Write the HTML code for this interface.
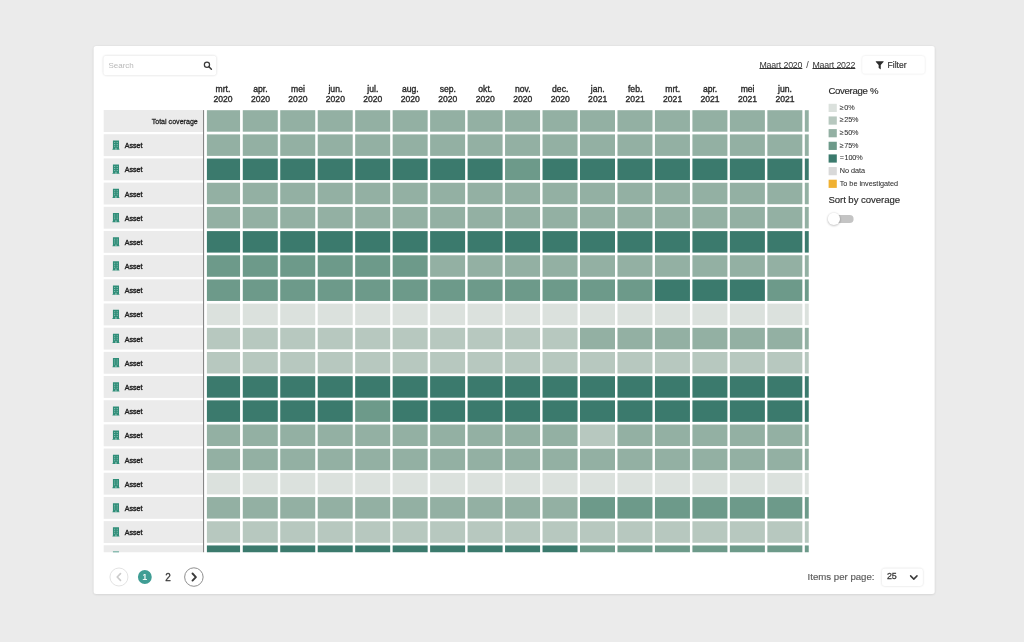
<!DOCTYPE html>
<html lang="nl"><head><meta charset="utf-8"><title>Coverage</title>
<style>
*{box-sizing:border-box;margin:0;padding:0}
html,body{width:1024px;height:642px;overflow:hidden}
body{background:#ebebeb;font-family:"Liberation Sans",sans-serif;color:#2b2b2b;position:relative}
.gfx{position:absolute;left:0;top:0;display:block}
.txt{position:absolute;left:0;top:0;width:1024px;height:642px;will-change:transform}
.txt>*{position:absolute;white-space:nowrap}
.ph{left:108.4px;top:60.8px;font-size:8px;color:#b9b9b9;line-height:10px}
.range{right:168.7px;top:59.9px;font-size:8.8px;letter-spacing:-0.16px;word-spacing:1.6px;line-height:11px;color:#333}
.range .u{text-decoration:underline;text-underline-offset:0.4px;text-decoration-thickness:0.9px;word-spacing:0}
.ftxt{left:887.6px;top:55.9px;font-size:8.5px;line-height:18.2px;color:#333;-webkit-text-stroke:0.2px #333}
.grid{left:103.4px;top:80px;width:705.35px;height:472.3px;overflow:hidden}
.grid>*{position:absolute;white-space:nowrap}
.mh{top:3.9px;width:35.4px;text-align:center;font-size:8.6px;line-height:10px;color:#2b2b2b;-webkit-text-stroke:0.35px #2b2b2b}
.lab{left:21.4px;height:21.9px;font-size:7.1px;color:#2b2b2b;-webkit-text-stroke:0.4px #222;line-height:24px}
.lab.tot{left:0;width:99.6px;text-align:right;padding-right:5.2px;-webkit-text-stroke:0.28px #222}
.lt{left:828.4px;font-size:9.6px;letter-spacing:-0.3px;line-height:14px;color:#2b2b2b;-webkit-text-stroke:0.15px #2b2b2b}
.lt.st{letter-spacing:-0.06px}
.li{left:839.7px;font-size:7.25px;line-height:12.6px;color:#2e2e2e;-webkit-text-stroke:0.06px #2e2e2e}
.li.n{word-spacing:-1.2px;letter-spacing:-0.12px}
.p1{left:137.9px;top:570.3px;width:13.8px;height:13.8px;color:#fff;font-size:9.2px;line-height:14px;text-align:center;-webkit-text-stroke:0.15px #fff}
.p2{left:161.6px;top:570.7px;width:13px;height:13.8px;font-size:10px;line-height:13.8px;text-align:center;color:#3a3a3a;-webkit-text-stroke:0.3px #3a3a3a}
.ipp{left:807.6px;top:571px;font-size:9.65px;line-height:12px;color:#5a5a5a;-webkit-text-stroke:0.15px #5a5a5a}
.sv{left:886.9px;top:568.4px;font-size:8.9px;line-height:17.6px;color:#3a3a3a;-webkit-text-stroke:0.3px #3a3a3a}

</style></head>
<body>
<svg class="gfx" width="1024" height="642" viewBox="0 0 1024 642">
<defs><clipPath id="gc"><rect x="103.4" y="80" width="705.35" height="472.29999999999995"/></clipPath><filter id="sh" x="-10%" y="-30%" width="120%" height="160%"><feGaussianBlur stdDeviation="1.1"/></filter></defs>
<rect x="93.6" y="46.6" width="841.1" height="547.8" rx="2.5" fill="#000" opacity="0.13" filter="url(#sh)"/><rect x="93.6" y="46" width="841.1" height="547.9" rx="2.5" fill="#fff"/>
<rect x="103.40" y="55.80" width="112.90" height="19.50" rx="3" fill="#000" opacity="0.17" filter="url(#sh)"/><rect x="103.40" y="55.80" width="112.90" height="19.50" rx="3" fill="#fff"/>
<rect x="862.20" y="55.90" width="62.60" height="17.80" rx="3" fill="#000" opacity="0.11" filter="url(#sh)"/><rect x="862.20" y="55.90" width="62.60" height="17.80" rx="3" fill="#fff"/>
<rect x="881.90" y="568.40" width="41.00" height="17.60" rx="3" fill="#000" opacity="0.15" filter="url(#sh)"/><rect x="881.90" y="568.40" width="41.00" height="17.60" rx="3" fill="#fff"/>
<g transform="translate(203.3 61.1) scale(0.5625)"><circle cx="6.5" cy="6.5" r="4.6" fill="none" stroke="#3a3a3a" stroke-width="2.2"/><path d="M10 10 L14.4 14.4" stroke="#3a3a3a" stroke-width="2.6" stroke-linecap="round"/></g>
<g transform="translate(875.5 61.1) scale(0.525)"><path d="M0.8 0.5 H15.2 Q16 0.5 15.6 1.3 L10 7.6 V15.2 Q10 16 9.3 15.5 L6.3 13.3 Q6 13 6 12.6 V7.6 L0.4 1.3 Q0 0.5 0.8 0.5 Z" fill="#2b2b2b"/></g>
<path d="M910.6 575.9 L913.8 579.1 L917.0 575.9" fill="none" stroke="#3a3a3a" stroke-width="1.5" stroke-linecap="round" stroke-linejoin="round"/>
<g clip-path="url(#gc)">
<rect x="103.5" y="110.05" width="99.5" height="21.9" fill="#ebebeb"/><rect x="103.5" y="134.23" width="99.5" height="21.9" fill="#ebebeb"/><g transform="translate(112.45 140.43)"><path d="M0.47 0 H6.53 V8.4 H7 V9.2 H0 V8.4 H0.47 Z" fill="#2f8d78"/><path d="M1.75 1.5h1v1h-1z M4.25 1.5h1v1h-1z M1.75 3.45h1v1h-1z M4.25 3.45h1v1h-1z M1.75 5.4h1v1h-1z M4.25 5.4h1v1h-1z M2.9 7.25h1.2v1.95h-1.2z" fill="#bfe0d6" opacity="0.7"/></g><rect x="103.5" y="158.41" width="99.5" height="21.9" fill="#ebebeb"/><g transform="translate(112.45 164.61)"><path d="M0.47 0 H6.53 V8.4 H7 V9.2 H0 V8.4 H0.47 Z" fill="#2f8d78"/><path d="M1.75 1.5h1v1h-1z M4.25 1.5h1v1h-1z M1.75 3.45h1v1h-1z M4.25 3.45h1v1h-1z M1.75 5.4h1v1h-1z M4.25 5.4h1v1h-1z M2.9 7.25h1.2v1.95h-1.2z" fill="#bfe0d6" opacity="0.7"/></g><rect x="103.5" y="182.59" width="99.5" height="21.9" fill="#ebebeb"/><g transform="translate(112.45 188.79)"><path d="M0.47 0 H6.53 V8.4 H7 V9.2 H0 V8.4 H0.47 Z" fill="#2f8d78"/><path d="M1.75 1.5h1v1h-1z M4.25 1.5h1v1h-1z M1.75 3.45h1v1h-1z M4.25 3.45h1v1h-1z M1.75 5.4h1v1h-1z M4.25 5.4h1v1h-1z M2.9 7.25h1.2v1.95h-1.2z" fill="#bfe0d6" opacity="0.7"/></g><rect x="103.5" y="206.77" width="99.5" height="21.9" fill="#ebebeb"/><g transform="translate(112.45 212.97)"><path d="M0.47 0 H6.53 V8.4 H7 V9.2 H0 V8.4 H0.47 Z" fill="#2f8d78"/><path d="M1.75 1.5h1v1h-1z M4.25 1.5h1v1h-1z M1.75 3.45h1v1h-1z M4.25 3.45h1v1h-1z M1.75 5.4h1v1h-1z M4.25 5.4h1v1h-1z M2.9 7.25h1.2v1.95h-1.2z" fill="#bfe0d6" opacity="0.7"/></g><rect x="103.5" y="230.95" width="99.5" height="21.9" fill="#ebebeb"/><g transform="translate(112.45 237.15)"><path d="M0.47 0 H6.53 V8.4 H7 V9.2 H0 V8.4 H0.47 Z" fill="#2f8d78"/><path d="M1.75 1.5h1v1h-1z M4.25 1.5h1v1h-1z M1.75 3.45h1v1h-1z M4.25 3.45h1v1h-1z M1.75 5.4h1v1h-1z M4.25 5.4h1v1h-1z M2.9 7.25h1.2v1.95h-1.2z" fill="#bfe0d6" opacity="0.7"/></g><rect x="103.5" y="255.13" width="99.5" height="21.9" fill="#ebebeb"/><g transform="translate(112.45 261.33)"><path d="M0.47 0 H6.53 V8.4 H7 V9.2 H0 V8.4 H0.47 Z" fill="#2f8d78"/><path d="M1.75 1.5h1v1h-1z M4.25 1.5h1v1h-1z M1.75 3.45h1v1h-1z M4.25 3.45h1v1h-1z M1.75 5.4h1v1h-1z M4.25 5.4h1v1h-1z M2.9 7.25h1.2v1.95h-1.2z" fill="#bfe0d6" opacity="0.7"/></g><rect x="103.5" y="279.31" width="99.5" height="21.9" fill="#ebebeb"/><g transform="translate(112.45 285.51)"><path d="M0.47 0 H6.53 V8.4 H7 V9.2 H0 V8.4 H0.47 Z" fill="#2f8d78"/><path d="M1.75 1.5h1v1h-1z M4.25 1.5h1v1h-1z M1.75 3.45h1v1h-1z M4.25 3.45h1v1h-1z M1.75 5.4h1v1h-1z M4.25 5.4h1v1h-1z M2.9 7.25h1.2v1.95h-1.2z" fill="#bfe0d6" opacity="0.7"/></g><rect x="103.5" y="303.49" width="99.5" height="21.9" fill="#ebebeb"/><g transform="translate(112.45 309.69)"><path d="M0.47 0 H6.53 V8.4 H7 V9.2 H0 V8.4 H0.47 Z" fill="#2f8d78"/><path d="M1.75 1.5h1v1h-1z M4.25 1.5h1v1h-1z M1.75 3.45h1v1h-1z M4.25 3.45h1v1h-1z M1.75 5.4h1v1h-1z M4.25 5.4h1v1h-1z M2.9 7.25h1.2v1.95h-1.2z" fill="#bfe0d6" opacity="0.7"/></g><rect x="103.5" y="327.67" width="99.5" height="21.9" fill="#ebebeb"/><g transform="translate(112.45 333.87)"><path d="M0.47 0 H6.53 V8.4 H7 V9.2 H0 V8.4 H0.47 Z" fill="#2f8d78"/><path d="M1.75 1.5h1v1h-1z M4.25 1.5h1v1h-1z M1.75 3.45h1v1h-1z M4.25 3.45h1v1h-1z M1.75 5.4h1v1h-1z M4.25 5.4h1v1h-1z M2.9 7.25h1.2v1.95h-1.2z" fill="#bfe0d6" opacity="0.7"/></g><rect x="103.5" y="351.85" width="99.5" height="21.9" fill="#ebebeb"/><g transform="translate(112.45 358.05)"><path d="M0.47 0 H6.53 V8.4 H7 V9.2 H0 V8.4 H0.47 Z" fill="#2f8d78"/><path d="M1.75 1.5h1v1h-1z M4.25 1.5h1v1h-1z M1.75 3.45h1v1h-1z M4.25 3.45h1v1h-1z M1.75 5.4h1v1h-1z M4.25 5.4h1v1h-1z M2.9 7.25h1.2v1.95h-1.2z" fill="#bfe0d6" opacity="0.7"/></g><rect x="103.5" y="376.03" width="99.5" height="21.9" fill="#ebebeb"/><g transform="translate(112.45 382.23)"><path d="M0.47 0 H6.53 V8.4 H7 V9.2 H0 V8.4 H0.47 Z" fill="#2f8d78"/><path d="M1.75 1.5h1v1h-1z M4.25 1.5h1v1h-1z M1.75 3.45h1v1h-1z M4.25 3.45h1v1h-1z M1.75 5.4h1v1h-1z M4.25 5.4h1v1h-1z M2.9 7.25h1.2v1.95h-1.2z" fill="#bfe0d6" opacity="0.7"/></g><rect x="103.5" y="400.21" width="99.5" height="21.9" fill="#ebebeb"/><g transform="translate(112.45 406.41)"><path d="M0.47 0 H6.53 V8.4 H7 V9.2 H0 V8.4 H0.47 Z" fill="#2f8d78"/><path d="M1.75 1.5h1v1h-1z M4.25 1.5h1v1h-1z M1.75 3.45h1v1h-1z M4.25 3.45h1v1h-1z M1.75 5.4h1v1h-1z M4.25 5.4h1v1h-1z M2.9 7.25h1.2v1.95h-1.2z" fill="#bfe0d6" opacity="0.7"/></g><rect x="103.5" y="424.39" width="99.5" height="21.9" fill="#ebebeb"/><g transform="translate(112.45 430.59)"><path d="M0.47 0 H6.53 V8.4 H7 V9.2 H0 V8.4 H0.47 Z" fill="#2f8d78"/><path d="M1.75 1.5h1v1h-1z M4.25 1.5h1v1h-1z M1.75 3.45h1v1h-1z M4.25 3.45h1v1h-1z M1.75 5.4h1v1h-1z M4.25 5.4h1v1h-1z M2.9 7.25h1.2v1.95h-1.2z" fill="#bfe0d6" opacity="0.7"/></g><rect x="103.5" y="448.57" width="99.5" height="21.9" fill="#ebebeb"/><g transform="translate(112.45 454.77)"><path d="M0.47 0 H6.53 V8.4 H7 V9.2 H0 V8.4 H0.47 Z" fill="#2f8d78"/><path d="M1.75 1.5h1v1h-1z M4.25 1.5h1v1h-1z M1.75 3.45h1v1h-1z M4.25 3.45h1v1h-1z M1.75 5.4h1v1h-1z M4.25 5.4h1v1h-1z M2.9 7.25h1.2v1.95h-1.2z" fill="#bfe0d6" opacity="0.7"/></g><rect x="103.5" y="472.75" width="99.5" height="21.9" fill="#ebebeb"/><g transform="translate(112.45 478.95)"><path d="M0.47 0 H6.53 V8.4 H7 V9.2 H0 V8.4 H0.47 Z" fill="#2f8d78"/><path d="M1.75 1.5h1v1h-1z M4.25 1.5h1v1h-1z M1.75 3.45h1v1h-1z M4.25 3.45h1v1h-1z M1.75 5.4h1v1h-1z M4.25 5.4h1v1h-1z M2.9 7.25h1.2v1.95h-1.2z" fill="#bfe0d6" opacity="0.7"/></g><rect x="103.5" y="496.93" width="99.5" height="21.9" fill="#ebebeb"/><g transform="translate(112.45 503.13)"><path d="M0.47 0 H6.53 V8.4 H7 V9.2 H0 V8.4 H0.47 Z" fill="#2f8d78"/><path d="M1.75 1.5h1v1h-1z M4.25 1.5h1v1h-1z M1.75 3.45h1v1h-1z M4.25 3.45h1v1h-1z M1.75 5.4h1v1h-1z M4.25 5.4h1v1h-1z M2.9 7.25h1.2v1.95h-1.2z" fill="#bfe0d6" opacity="0.7"/></g><rect x="103.5" y="521.11" width="99.5" height="21.9" fill="#ebebeb"/><g transform="translate(112.45 527.31)"><path d="M0.47 0 H6.53 V8.4 H7 V9.2 H0 V8.4 H0.47 Z" fill="#2f8d78"/><path d="M1.75 1.5h1v1h-1z M4.25 1.5h1v1h-1z M1.75 3.45h1v1h-1z M4.25 3.45h1v1h-1z M1.75 5.4h1v1h-1z M4.25 5.4h1v1h-1z M2.9 7.25h1.2v1.95h-1.2z" fill="#bfe0d6" opacity="0.7"/></g><rect x="103.5" y="545.29" width="99.5" height="21.9" fill="#ebebeb"/><g transform="translate(112.45 551.49)"><path d="M0.47 0 H6.53 V8.4 H7 V9.2 H0 V8.4 H0.47 Z" fill="#2f8d78"/><path d="M1.75 1.5h1v1h-1z M4.25 1.5h1v1h-1z M1.75 3.45h1v1h-1z M4.25 3.45h1v1h-1z M1.75 5.4h1v1h-1z M4.25 5.4h1v1h-1z M2.9 7.25h1.2v1.95h-1.2z" fill="#bfe0d6" opacity="0.7"/></g>
<rect x="203" y="110.1" width="1.1" height="445" fill="#868686"/>
<g transform="translate(0 110.20)"><rect x="206.90" width="33.15" height="21.5" fill="#93b0a3"/><rect x="242.77" width="35.00" height="21.5" fill="#93b0a3"/><rect x="280.24" width="35.00" height="21.5" fill="#93b0a3"/><rect x="317.71" width="35.00" height="21.5" fill="#93b0a3"/><rect x="355.18" width="35.00" height="21.5" fill="#93b0a3"/><rect x="392.65" width="35.00" height="21.5" fill="#93b0a3"/><rect x="430.12" width="35.00" height="21.5" fill="#93b0a3"/><rect x="467.59" width="35.00" height="21.5" fill="#93b0a3"/><rect x="505.06" width="35.00" height="21.5" fill="#93b0a3"/><rect x="542.53" width="35.00" height="21.5" fill="#93b0a3"/><rect x="580.00" width="35.00" height="21.5" fill="#93b0a3"/><rect x="617.47" width="35.00" height="21.5" fill="#93b0a3"/><rect x="654.94" width="35.00" height="21.5" fill="#93b0a3"/><rect x="692.41" width="35.00" height="21.5" fill="#93b0a3"/><rect x="729.88" width="35.00" height="21.5" fill="#93b0a3"/><rect x="767.35" width="35.00" height="21.5" fill="#93b0a3"/><rect x="804.82" width="35.00" height="21.5" fill="#93b0a3"/></g>
<g transform="translate(0 134.38)"><rect x="206.90" width="33.15" height="21.5" fill="#93b0a3"/><rect x="242.77" width="35.00" height="21.5" fill="#93b0a3"/><rect x="280.24" width="35.00" height="21.5" fill="#93b0a3"/><rect x="317.71" width="35.00" height="21.5" fill="#93b0a3"/><rect x="355.18" width="35.00" height="21.5" fill="#93b0a3"/><rect x="392.65" width="35.00" height="21.5" fill="#93b0a3"/><rect x="430.12" width="35.00" height="21.5" fill="#93b0a3"/><rect x="467.59" width="35.00" height="21.5" fill="#93b0a3"/><rect x="505.06" width="35.00" height="21.5" fill="#93b0a3"/><rect x="542.53" width="35.00" height="21.5" fill="#93b0a3"/><rect x="580.00" width="35.00" height="21.5" fill="#93b0a3"/><rect x="617.47" width="35.00" height="21.5" fill="#93b0a3"/><rect x="654.94" width="35.00" height="21.5" fill="#93b0a3"/><rect x="692.41" width="35.00" height="21.5" fill="#93b0a3"/><rect x="729.88" width="35.00" height="21.5" fill="#93b0a3"/><rect x="767.35" width="35.00" height="21.5" fill="#93b0a3"/><rect x="804.82" width="35.00" height="21.5" fill="#93b0a3"/></g>
<g transform="translate(0 158.56)"><rect x="206.90" width="33.15" height="21.5" fill="#3b7a6d"/><rect x="242.77" width="35.00" height="21.5" fill="#3b7a6d"/><rect x="280.24" width="35.00" height="21.5" fill="#3b7a6d"/><rect x="317.71" width="35.00" height="21.5" fill="#3b7a6d"/><rect x="355.18" width="35.00" height="21.5" fill="#3b7a6d"/><rect x="392.65" width="35.00" height="21.5" fill="#3b7a6d"/><rect x="430.12" width="35.00" height="21.5" fill="#3b7a6d"/><rect x="467.59" width="35.00" height="21.5" fill="#3b7a6d"/><rect x="505.06" width="35.00" height="21.5" fill="#6d9a8a"/><rect x="542.53" width="35.00" height="21.5" fill="#3b7a6d"/><rect x="580.00" width="35.00" height="21.5" fill="#3b7a6d"/><rect x="617.47" width="35.00" height="21.5" fill="#3b7a6d"/><rect x="654.94" width="35.00" height="21.5" fill="#3b7a6d"/><rect x="692.41" width="35.00" height="21.5" fill="#3b7a6d"/><rect x="729.88" width="35.00" height="21.5" fill="#3b7a6d"/><rect x="767.35" width="35.00" height="21.5" fill="#3b7a6d"/><rect x="804.82" width="35.00" height="21.5" fill="#3b7a6d"/></g>
<g transform="translate(0 182.74)"><rect x="206.90" width="33.15" height="21.5" fill="#93b0a3"/><rect x="242.77" width="35.00" height="21.5" fill="#93b0a3"/><rect x="280.24" width="35.00" height="21.5" fill="#93b0a3"/><rect x="317.71" width="35.00" height="21.5" fill="#93b0a3"/><rect x="355.18" width="35.00" height="21.5" fill="#93b0a3"/><rect x="392.65" width="35.00" height="21.5" fill="#93b0a3"/><rect x="430.12" width="35.00" height="21.5" fill="#93b0a3"/><rect x="467.59" width="35.00" height="21.5" fill="#93b0a3"/><rect x="505.06" width="35.00" height="21.5" fill="#93b0a3"/><rect x="542.53" width="35.00" height="21.5" fill="#93b0a3"/><rect x="580.00" width="35.00" height="21.5" fill="#93b0a3"/><rect x="617.47" width="35.00" height="21.5" fill="#93b0a3"/><rect x="654.94" width="35.00" height="21.5" fill="#93b0a3"/><rect x="692.41" width="35.00" height="21.5" fill="#93b0a3"/><rect x="729.88" width="35.00" height="21.5" fill="#93b0a3"/><rect x="767.35" width="35.00" height="21.5" fill="#93b0a3"/><rect x="804.82" width="35.00" height="21.5" fill="#93b0a3"/></g>
<g transform="translate(0 206.92)"><rect x="206.90" width="33.15" height="21.5" fill="#93b0a3"/><rect x="242.77" width="35.00" height="21.5" fill="#93b0a3"/><rect x="280.24" width="35.00" height="21.5" fill="#93b0a3"/><rect x="317.71" width="35.00" height="21.5" fill="#93b0a3"/><rect x="355.18" width="35.00" height="21.5" fill="#93b0a3"/><rect x="392.65" width="35.00" height="21.5" fill="#93b0a3"/><rect x="430.12" width="35.00" height="21.5" fill="#93b0a3"/><rect x="467.59" width="35.00" height="21.5" fill="#93b0a3"/><rect x="505.06" width="35.00" height="21.5" fill="#93b0a3"/><rect x="542.53" width="35.00" height="21.5" fill="#93b0a3"/><rect x="580.00" width="35.00" height="21.5" fill="#93b0a3"/><rect x="617.47" width="35.00" height="21.5" fill="#93b0a3"/><rect x="654.94" width="35.00" height="21.5" fill="#93b0a3"/><rect x="692.41" width="35.00" height="21.5" fill="#93b0a3"/><rect x="729.88" width="35.00" height="21.5" fill="#93b0a3"/><rect x="767.35" width="35.00" height="21.5" fill="#93b0a3"/><rect x="804.82" width="35.00" height="21.5" fill="#93b0a3"/></g>
<g transform="translate(0 231.10)"><rect x="206.90" width="33.15" height="21.5" fill="#3b7a6d"/><rect x="242.77" width="35.00" height="21.5" fill="#3b7a6d"/><rect x="280.24" width="35.00" height="21.5" fill="#3b7a6d"/><rect x="317.71" width="35.00" height="21.5" fill="#3b7a6d"/><rect x="355.18" width="35.00" height="21.5" fill="#3b7a6d"/><rect x="392.65" width="35.00" height="21.5" fill="#3b7a6d"/><rect x="430.12" width="35.00" height="21.5" fill="#3b7a6d"/><rect x="467.59" width="35.00" height="21.5" fill="#3b7a6d"/><rect x="505.06" width="35.00" height="21.5" fill="#3b7a6d"/><rect x="542.53" width="35.00" height="21.5" fill="#3b7a6d"/><rect x="580.00" width="35.00" height="21.5" fill="#3b7a6d"/><rect x="617.47" width="35.00" height="21.5" fill="#3b7a6d"/><rect x="654.94" width="35.00" height="21.5" fill="#3b7a6d"/><rect x="692.41" width="35.00" height="21.5" fill="#3b7a6d"/><rect x="729.88" width="35.00" height="21.5" fill="#3b7a6d"/><rect x="767.35" width="35.00" height="21.5" fill="#3b7a6d"/><rect x="804.82" width="35.00" height="21.5" fill="#3b7a6d"/></g>
<g transform="translate(0 255.28)"><rect x="206.90" width="33.15" height="21.5" fill="#6d9a8a"/><rect x="242.77" width="35.00" height="21.5" fill="#6d9a8a"/><rect x="280.24" width="35.00" height="21.5" fill="#6d9a8a"/><rect x="317.71" width="35.00" height="21.5" fill="#6d9a8a"/><rect x="355.18" width="35.00" height="21.5" fill="#6d9a8a"/><rect x="392.65" width="35.00" height="21.5" fill="#6d9a8a"/><rect x="430.12" width="35.00" height="21.5" fill="#93b0a3"/><rect x="467.59" width="35.00" height="21.5" fill="#93b0a3"/><rect x="505.06" width="35.00" height="21.5" fill="#93b0a3"/><rect x="542.53" width="35.00" height="21.5" fill="#93b0a3"/><rect x="580.00" width="35.00" height="21.5" fill="#93b0a3"/><rect x="617.47" width="35.00" height="21.5" fill="#93b0a3"/><rect x="654.94" width="35.00" height="21.5" fill="#93b0a3"/><rect x="692.41" width="35.00" height="21.5" fill="#93b0a3"/><rect x="729.88" width="35.00" height="21.5" fill="#93b0a3"/><rect x="767.35" width="35.00" height="21.5" fill="#93b0a3"/><rect x="804.82" width="35.00" height="21.5" fill="#93b0a3"/></g>
<g transform="translate(0 279.46)"><rect x="206.90" width="33.15" height="21.5" fill="#6d9a8a"/><rect x="242.77" width="35.00" height="21.5" fill="#6d9a8a"/><rect x="280.24" width="35.00" height="21.5" fill="#6d9a8a"/><rect x="317.71" width="35.00" height="21.5" fill="#6d9a8a"/><rect x="355.18" width="35.00" height="21.5" fill="#6d9a8a"/><rect x="392.65" width="35.00" height="21.5" fill="#6d9a8a"/><rect x="430.12" width="35.00" height="21.5" fill="#6d9a8a"/><rect x="467.59" width="35.00" height="21.5" fill="#6d9a8a"/><rect x="505.06" width="35.00" height="21.5" fill="#6d9a8a"/><rect x="542.53" width="35.00" height="21.5" fill="#6d9a8a"/><rect x="580.00" width="35.00" height="21.5" fill="#6d9a8a"/><rect x="617.47" width="35.00" height="21.5" fill="#6d9a8a"/><rect x="654.94" width="35.00" height="21.5" fill="#3b7a6d"/><rect x="692.41" width="35.00" height="21.5" fill="#3b7a6d"/><rect x="729.88" width="35.00" height="21.5" fill="#3b7a6d"/><rect x="767.35" width="35.00" height="21.5" fill="#6d9a8a"/><rect x="804.82" width="35.00" height="21.5" fill="#6d9a8a"/></g>
<g transform="translate(0 303.64)"><rect x="206.90" width="33.15" height="21.5" fill="#dbe1dd"/><rect x="242.77" width="35.00" height="21.5" fill="#dbe1dd"/><rect x="280.24" width="35.00" height="21.5" fill="#dbe1dd"/><rect x="317.71" width="35.00" height="21.5" fill="#dbe1dd"/><rect x="355.18" width="35.00" height="21.5" fill="#dbe1dd"/><rect x="392.65" width="35.00" height="21.5" fill="#dbe1dd"/><rect x="430.12" width="35.00" height="21.5" fill="#dbe1dd"/><rect x="467.59" width="35.00" height="21.5" fill="#dbe1dd"/><rect x="505.06" width="35.00" height="21.5" fill="#dbe1dd"/><rect x="542.53" width="35.00" height="21.5" fill="#dbe1dd"/><rect x="580.00" width="35.00" height="21.5" fill="#dbe1dd"/><rect x="617.47" width="35.00" height="21.5" fill="#dbe1dd"/><rect x="654.94" width="35.00" height="21.5" fill="#dbe1dd"/><rect x="692.41" width="35.00" height="21.5" fill="#dbe1dd"/><rect x="729.88" width="35.00" height="21.5" fill="#dbe1dd"/><rect x="767.35" width="35.00" height="21.5" fill="#dbe1dd"/><rect x="804.82" width="35.00" height="21.5" fill="#dbe1dd"/></g>
<g transform="translate(0 327.82)"><rect x="206.90" width="33.15" height="21.5" fill="#b7c8bf"/><rect x="242.77" width="35.00" height="21.5" fill="#b7c8bf"/><rect x="280.24" width="35.00" height="21.5" fill="#b7c8bf"/><rect x="317.71" width="35.00" height="21.5" fill="#b7c8bf"/><rect x="355.18" width="35.00" height="21.5" fill="#b7c8bf"/><rect x="392.65" width="35.00" height="21.5" fill="#b7c8bf"/><rect x="430.12" width="35.00" height="21.5" fill="#b7c8bf"/><rect x="467.59" width="35.00" height="21.5" fill="#b7c8bf"/><rect x="505.06" width="35.00" height="21.5" fill="#b7c8bf"/><rect x="542.53" width="35.00" height="21.5" fill="#b7c8bf"/><rect x="580.00" width="35.00" height="21.5" fill="#93b0a3"/><rect x="617.47" width="35.00" height="21.5" fill="#93b0a3"/><rect x="654.94" width="35.00" height="21.5" fill="#93b0a3"/><rect x="692.41" width="35.00" height="21.5" fill="#93b0a3"/><rect x="729.88" width="35.00" height="21.5" fill="#93b0a3"/><rect x="767.35" width="35.00" height="21.5" fill="#93b0a3"/><rect x="804.82" width="35.00" height="21.5" fill="#93b0a3"/></g>
<g transform="translate(0 352.00)"><rect x="206.90" width="33.15" height="21.5" fill="#b7c8bf"/><rect x="242.77" width="35.00" height="21.5" fill="#b7c8bf"/><rect x="280.24" width="35.00" height="21.5" fill="#b7c8bf"/><rect x="317.71" width="35.00" height="21.5" fill="#b7c8bf"/><rect x="355.18" width="35.00" height="21.5" fill="#b7c8bf"/><rect x="392.65" width="35.00" height="21.5" fill="#b7c8bf"/><rect x="430.12" width="35.00" height="21.5" fill="#b7c8bf"/><rect x="467.59" width="35.00" height="21.5" fill="#b7c8bf"/><rect x="505.06" width="35.00" height="21.5" fill="#b7c8bf"/><rect x="542.53" width="35.00" height="21.5" fill="#b7c8bf"/><rect x="580.00" width="35.00" height="21.5" fill="#b7c8bf"/><rect x="617.47" width="35.00" height="21.5" fill="#b7c8bf"/><rect x="654.94" width="35.00" height="21.5" fill="#b7c8bf"/><rect x="692.41" width="35.00" height="21.5" fill="#b7c8bf"/><rect x="729.88" width="35.00" height="21.5" fill="#b7c8bf"/><rect x="767.35" width="35.00" height="21.5" fill="#b7c8bf"/><rect x="804.82" width="35.00" height="21.5" fill="#b7c8bf"/></g>
<g transform="translate(0 376.18)"><rect x="206.90" width="33.15" height="21.5" fill="#3b7a6d"/><rect x="242.77" width="35.00" height="21.5" fill="#3b7a6d"/><rect x="280.24" width="35.00" height="21.5" fill="#3b7a6d"/><rect x="317.71" width="35.00" height="21.5" fill="#3b7a6d"/><rect x="355.18" width="35.00" height="21.5" fill="#3b7a6d"/><rect x="392.65" width="35.00" height="21.5" fill="#3b7a6d"/><rect x="430.12" width="35.00" height="21.5" fill="#3b7a6d"/><rect x="467.59" width="35.00" height="21.5" fill="#3b7a6d"/><rect x="505.06" width="35.00" height="21.5" fill="#3b7a6d"/><rect x="542.53" width="35.00" height="21.5" fill="#3b7a6d"/><rect x="580.00" width="35.00" height="21.5" fill="#3b7a6d"/><rect x="617.47" width="35.00" height="21.5" fill="#3b7a6d"/><rect x="654.94" width="35.00" height="21.5" fill="#3b7a6d"/><rect x="692.41" width="35.00" height="21.5" fill="#3b7a6d"/><rect x="729.88" width="35.00" height="21.5" fill="#3b7a6d"/><rect x="767.35" width="35.00" height="21.5" fill="#3b7a6d"/><rect x="804.82" width="35.00" height="21.5" fill="#3b7a6d"/></g>
<g transform="translate(0 400.36)"><rect x="206.90" width="33.15" height="21.5" fill="#3b7a6d"/><rect x="242.77" width="35.00" height="21.5" fill="#3b7a6d"/><rect x="280.24" width="35.00" height="21.5" fill="#3b7a6d"/><rect x="317.71" width="35.00" height="21.5" fill="#3b7a6d"/><rect x="355.18" width="35.00" height="21.5" fill="#6d9a8a"/><rect x="392.65" width="35.00" height="21.5" fill="#3b7a6d"/><rect x="430.12" width="35.00" height="21.5" fill="#3b7a6d"/><rect x="467.59" width="35.00" height="21.5" fill="#3b7a6d"/><rect x="505.06" width="35.00" height="21.5" fill="#3b7a6d"/><rect x="542.53" width="35.00" height="21.5" fill="#3b7a6d"/><rect x="580.00" width="35.00" height="21.5" fill="#3b7a6d"/><rect x="617.47" width="35.00" height="21.5" fill="#3b7a6d"/><rect x="654.94" width="35.00" height="21.5" fill="#3b7a6d"/><rect x="692.41" width="35.00" height="21.5" fill="#3b7a6d"/><rect x="729.88" width="35.00" height="21.5" fill="#3b7a6d"/><rect x="767.35" width="35.00" height="21.5" fill="#3b7a6d"/><rect x="804.82" width="35.00" height="21.5" fill="#3b7a6d"/></g>
<g transform="translate(0 424.54)"><rect x="206.90" width="33.15" height="21.5" fill="#93b0a3"/><rect x="242.77" width="35.00" height="21.5" fill="#93b0a3"/><rect x="280.24" width="35.00" height="21.5" fill="#93b0a3"/><rect x="317.71" width="35.00" height="21.5" fill="#93b0a3"/><rect x="355.18" width="35.00" height="21.5" fill="#93b0a3"/><rect x="392.65" width="35.00" height="21.5" fill="#93b0a3"/><rect x="430.12" width="35.00" height="21.5" fill="#93b0a3"/><rect x="467.59" width="35.00" height="21.5" fill="#93b0a3"/><rect x="505.06" width="35.00" height="21.5" fill="#93b0a3"/><rect x="542.53" width="35.00" height="21.5" fill="#93b0a3"/><rect x="580.00" width="35.00" height="21.5" fill="#b7c8bf"/><rect x="617.47" width="35.00" height="21.5" fill="#93b0a3"/><rect x="654.94" width="35.00" height="21.5" fill="#93b0a3"/><rect x="692.41" width="35.00" height="21.5" fill="#93b0a3"/><rect x="729.88" width="35.00" height="21.5" fill="#93b0a3"/><rect x="767.35" width="35.00" height="21.5" fill="#93b0a3"/><rect x="804.82" width="35.00" height="21.5" fill="#93b0a3"/></g>
<g transform="translate(0 448.72)"><rect x="206.90" width="33.15" height="21.5" fill="#93b0a3"/><rect x="242.77" width="35.00" height="21.5" fill="#93b0a3"/><rect x="280.24" width="35.00" height="21.5" fill="#93b0a3"/><rect x="317.71" width="35.00" height="21.5" fill="#93b0a3"/><rect x="355.18" width="35.00" height="21.5" fill="#93b0a3"/><rect x="392.65" width="35.00" height="21.5" fill="#93b0a3"/><rect x="430.12" width="35.00" height="21.5" fill="#93b0a3"/><rect x="467.59" width="35.00" height="21.5" fill="#93b0a3"/><rect x="505.06" width="35.00" height="21.5" fill="#93b0a3"/><rect x="542.53" width="35.00" height="21.5" fill="#93b0a3"/><rect x="580.00" width="35.00" height="21.5" fill="#93b0a3"/><rect x="617.47" width="35.00" height="21.5" fill="#93b0a3"/><rect x="654.94" width="35.00" height="21.5" fill="#93b0a3"/><rect x="692.41" width="35.00" height="21.5" fill="#93b0a3"/><rect x="729.88" width="35.00" height="21.5" fill="#93b0a3"/><rect x="767.35" width="35.00" height="21.5" fill="#93b0a3"/><rect x="804.82" width="35.00" height="21.5" fill="#93b0a3"/></g>
<g transform="translate(0 472.90)"><rect x="206.90" width="33.15" height="21.5" fill="#dbe1dd"/><rect x="242.77" width="35.00" height="21.5" fill="#dbe1dd"/><rect x="280.24" width="35.00" height="21.5" fill="#dbe1dd"/><rect x="317.71" width="35.00" height="21.5" fill="#dbe1dd"/><rect x="355.18" width="35.00" height="21.5" fill="#dbe1dd"/><rect x="392.65" width="35.00" height="21.5" fill="#dbe1dd"/><rect x="430.12" width="35.00" height="21.5" fill="#dbe1dd"/><rect x="467.59" width="35.00" height="21.5" fill="#dbe1dd"/><rect x="505.06" width="35.00" height="21.5" fill="#dbe1dd"/><rect x="542.53" width="35.00" height="21.5" fill="#dbe1dd"/><rect x="580.00" width="35.00" height="21.5" fill="#dbe1dd"/><rect x="617.47" width="35.00" height="21.5" fill="#dbe1dd"/><rect x="654.94" width="35.00" height="21.5" fill="#dbe1dd"/><rect x="692.41" width="35.00" height="21.5" fill="#dbe1dd"/><rect x="729.88" width="35.00" height="21.5" fill="#dbe1dd"/><rect x="767.35" width="35.00" height="21.5" fill="#dbe1dd"/><rect x="804.82" width="35.00" height="21.5" fill="#dbe1dd"/></g>
<g transform="translate(0 497.08)"><rect x="206.90" width="33.15" height="21.5" fill="#93b0a3"/><rect x="242.77" width="35.00" height="21.5" fill="#93b0a3"/><rect x="280.24" width="35.00" height="21.5" fill="#93b0a3"/><rect x="317.71" width="35.00" height="21.5" fill="#93b0a3"/><rect x="355.18" width="35.00" height="21.5" fill="#93b0a3"/><rect x="392.65" width="35.00" height="21.5" fill="#93b0a3"/><rect x="430.12" width="35.00" height="21.5" fill="#93b0a3"/><rect x="467.59" width="35.00" height="21.5" fill="#93b0a3"/><rect x="505.06" width="35.00" height="21.5" fill="#93b0a3"/><rect x="542.53" width="35.00" height="21.5" fill="#93b0a3"/><rect x="580.00" width="35.00" height="21.5" fill="#6d9a8a"/><rect x="617.47" width="35.00" height="21.5" fill="#6d9a8a"/><rect x="654.94" width="35.00" height="21.5" fill="#6d9a8a"/><rect x="692.41" width="35.00" height="21.5" fill="#6d9a8a"/><rect x="729.88" width="35.00" height="21.5" fill="#6d9a8a"/><rect x="767.35" width="35.00" height="21.5" fill="#6d9a8a"/><rect x="804.82" width="35.00" height="21.5" fill="#6d9a8a"/></g>
<g transform="translate(0 521.26)"><rect x="206.90" width="33.15" height="21.5" fill="#b7c8bf"/><rect x="242.77" width="35.00" height="21.5" fill="#b7c8bf"/><rect x="280.24" width="35.00" height="21.5" fill="#b7c8bf"/><rect x="317.71" width="35.00" height="21.5" fill="#b7c8bf"/><rect x="355.18" width="35.00" height="21.5" fill="#b7c8bf"/><rect x="392.65" width="35.00" height="21.5" fill="#b7c8bf"/><rect x="430.12" width="35.00" height="21.5" fill="#b7c8bf"/><rect x="467.59" width="35.00" height="21.5" fill="#b7c8bf"/><rect x="505.06" width="35.00" height="21.5" fill="#b7c8bf"/><rect x="542.53" width="35.00" height="21.5" fill="#b7c8bf"/><rect x="580.00" width="35.00" height="21.5" fill="#b7c8bf"/><rect x="617.47" width="35.00" height="21.5" fill="#b7c8bf"/><rect x="654.94" width="35.00" height="21.5" fill="#b7c8bf"/><rect x="692.41" width="35.00" height="21.5" fill="#b7c8bf"/><rect x="729.88" width="35.00" height="21.5" fill="#b7c8bf"/><rect x="767.35" width="35.00" height="21.5" fill="#b7c8bf"/><rect x="804.82" width="35.00" height="21.5" fill="#b7c8bf"/></g>
<g transform="translate(0 545.44)"><rect x="206.90" width="33.15" height="21.5" fill="#3b7a6d"/><rect x="242.77" width="35.00" height="21.5" fill="#3b7a6d"/><rect x="280.24" width="35.00" height="21.5" fill="#3b7a6d"/><rect x="317.71" width="35.00" height="21.5" fill="#3b7a6d"/><rect x="355.18" width="35.00" height="21.5" fill="#3b7a6d"/><rect x="392.65" width="35.00" height="21.5" fill="#3b7a6d"/><rect x="430.12" width="35.00" height="21.5" fill="#3b7a6d"/><rect x="467.59" width="35.00" height="21.5" fill="#3b7a6d"/><rect x="505.06" width="35.00" height="21.5" fill="#3b7a6d"/><rect x="542.53" width="35.00" height="21.5" fill="#3b7a6d"/><rect x="580.00" width="35.00" height="21.5" fill="#6d9a8a"/><rect x="617.47" width="35.00" height="21.5" fill="#6d9a8a"/><rect x="654.94" width="35.00" height="21.5" fill="#6d9a8a"/><rect x="692.41" width="35.00" height="21.5" fill="#6d9a8a"/><rect x="729.88" width="35.00" height="21.5" fill="#6d9a8a"/><rect x="767.35" width="35.00" height="21.5" fill="#6d9a8a"/><rect x="804.82" width="35.00" height="21.5" fill="#6d9a8a"/></g>
</g>
<rect x="828.6" y="103.80" width="8.2" height="8.2" fill="#dbe1dd"/><rect x="828.6" y="116.45" width="8.2" height="8.2" fill="#b7c8bf"/><rect x="828.6" y="129.10" width="8.2" height="8.2" fill="#93b0a3"/><rect x="828.6" y="141.75" width="8.2" height="8.2" fill="#6d9a8a"/><rect x="828.6" y="154.40" width="8.2" height="8.2" fill="#3b7a6d"/><rect x="828.6" y="167.05" width="8.2" height="8.2" fill="#d9d9d9"/><rect x="828.6" y="179.70" width="8.2" height="8.2" fill="#f0b132"/>
<rect x="831" y="215.1" width="22.6" height="7.9" rx="3.95" fill="#c4c4c4"/><circle cx="833.9" cy="219.5" r="6.2" fill="#000" opacity="0.28" filter="url(#sh)"/><circle cx="833.9" cy="218.9" r="6.1" fill="#fff"/>
<circle cx="118.96" cy="577" r="9" fill="#fff" stroke="#e3e3e3"/><path d="M120.5 573.7 L117.2 577 L120.5 580.3" fill="none" stroke="#cbcbcb" stroke-width="1.65" stroke-linecap="round" stroke-linejoin="round"/><circle cx="144.84" cy="577" r="6.9" fill="#3f9d94"/><circle cx="193.88" cy="577.05" r="9.25" fill="#fff" stroke="#8f8f8f"/><path d="M192.5 573.5 L195.9 577.05 L192.5 580.6" fill="none" stroke="#3a3a3a" stroke-width="1.9" stroke-linecap="round" stroke-linejoin="round"/>
</svg>
<div class="txt">
<span class="ph">Search</span>
<div class="range"><span class="u">Maart 2020</span> / <span class="u">Maart 2022</span></div>
<span class="ftxt">Filter</span>
<div class="grid">
<div class="mh" style="left:101.90px">mrt.<br>2020</div><div class="mh" style="left:139.37px">apr.<br>2020</div><div class="mh" style="left:176.84px">mei<br>2020</div><div class="mh" style="left:214.31px">jun.<br>2020</div><div class="mh" style="left:251.78px">jul.<br>2020</div><div class="mh" style="left:289.25px">aug.<br>2020</div><div class="mh" style="left:326.72px">sep.<br>2020</div><div class="mh" style="left:364.19px">okt.<br>2020</div><div class="mh" style="left:401.66px">nov.<br>2020</div><div class="mh" style="left:439.13px">dec.<br>2020</div><div class="mh" style="left:476.60px">jan.<br>2021</div><div class="mh" style="left:514.07px">feb.<br>2021</div><div class="mh" style="left:551.54px">mrt.<br>2021</div><div class="mh" style="left:589.01px">apr.<br>2021</div><div class="mh" style="left:626.48px">mei<br>2021</div><div class="mh" style="left:663.95px">jun.<br>2021</div><div class="mh" style="left:701.42px">jul.<br>2021</div>
<div class="lab tot" style="top:30.05px">Total coverage</div>
<div class="lab" style="top:54.23px">Asset</div><div class="lab" style="top:78.41px">Asset</div><div class="lab" style="top:102.59px">Asset</div><div class="lab" style="top:126.77px">Asset</div><div class="lab" style="top:150.95px">Asset</div><div class="lab" style="top:175.13px">Asset</div><div class="lab" style="top:199.31px">Asset</div><div class="lab" style="top:223.49px">Asset</div><div class="lab" style="top:247.67px">Asset</div><div class="lab" style="top:271.85px">Asset</div><div class="lab" style="top:296.03px">Asset</div><div class="lab" style="top:320.21px">Asset</div><div class="lab" style="top:344.39px">Asset</div><div class="lab" style="top:368.57px">Asset</div><div class="lab" style="top:392.75px">Asset</div><div class="lab" style="top:416.93px">Asset</div><div class="lab" style="top:441.11px">Asset</div><div class="lab" style="top:465.29px">Asset</div>
</div>
<div class="lt" style="top:83.7px">Coverage %</div>
<div class="li n" style="top:101.60px">≥ 0%</div><div class="li n" style="top:114.25px">≥ 25%</div><div class="li n" style="top:126.90px">≥ 50%</div><div class="li n" style="top:139.55px">≥ 75%</div><div class="li n" style="top:152.20px">= 100%</div><div class="li" style="top:164.85px">No data</div><div class="li" style="top:177.50px">To be investigated</div>
<div class="lt st" style="top:193.1px">Sort by coverage</div>
<span class="p1">1</span><span class="p2">2</span>
<div class="ipp">Items per page:</div><span class="sv">25</span>
</div>
</body></html>
